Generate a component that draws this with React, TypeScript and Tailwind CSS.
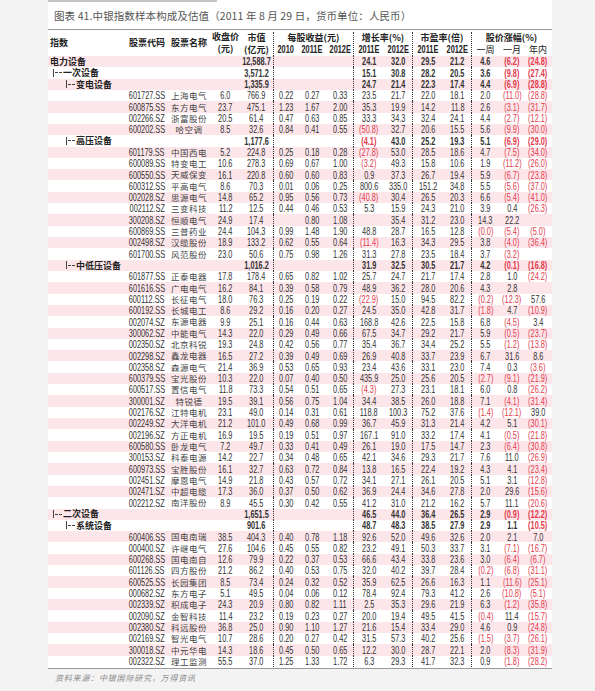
import React from 'react';

// column widths, left to right
const W = [
  'w-[79px]', 'w-[40px]', 'w-[44px]', 'w-[29px]', 'w-[34px]',
  'w-[24px]', 'w-[29px]', 'w-[27px]',
  'w-[30px]', 'w-[29px]',
  'w-[31px]', 'w-[28px]',
  'w-[27px]', 'w-[26px]', 'w-[26px]',
];
const DOT = 'border-r border-dotted border-[#333]';
const hasDot = (i: number) => i === 4 || i === 7 || i === 9 || i === 11;

const NUM = "font-['Liberation_Sans',Arial,sans-serif]";
const CJK = "font-['Noto_Sans_CJK_SC',sans-serif]";

const data = [
  '#0 电力设备 12,588.7 24.1 32.0 29.5 21.2 4.6 (6.2) (24.8)',
  '#1 一次设备 3,571.2 15.1 30.8 28.2 20.5 3.6 (9.8) (27.4)',
  '#2 变电设备 1,335.9 24.7 21.4 22.3 17.4 4.4 (6.9) (28.8)',
  '601727.SS 上海电气 6.0 766.9 0.22 0.27 0.33 23.5 21.7 22.0 18.1 2.0 (11.0) (28.8)',
  '600875.SS 东方电气 23.7 475.1 1.23 1.67 2.00 35.3 19.9 14.2 11.8 2.6 (3.1) (31.7)',
  '002266.SZ 浙富股份 20.5 61.4 0.47 0.63 0.85 33.3 34.3 32.4 24.1 4.4 (2.7) (12.1)',
  '600202.SS 哈空调 8.5 32.6 0.84 0.41 0.55 (50.8) 32.7 20.6 15.5 5.6 (9.9) (30.0)',
  '#2 高压设备 1,177.6 (4.1) 43.0 25.2 19.3 5.1 (6.9) (29.0)',
  '601179.SS 中国西电 5.2 224.8 0.25 0.18 0.28 (27.8) 53.0 28.5 18.6 4.7 (7.5) (34.0)',
  '600089.SS 特变电工 10.6 278.3 0.69 0.67 1.00 (3.2) 49.3 15.8 10.6 1.9 (11.2) (26.0)',
  '600550.SS 天威保变 16.1 220.8 0.60 0.60 0.83 0.9 37.3 26.7 19.4 5.9 (6.7) (23.8)',
  '600312.SS 平高电气 8.6 70.3 0.01 0.06 0.25 800.6 335.0 151.2 34.8 5.5 (5.6) (37.0)',
  '002028.SZ 思源电气 14.8 65.2 0.95 0.56 0.73 (40.8) 30.4 26.5 20.3 6.6 (5.4) (41.0)',
  '002112.SZ 三变科技 11.2 12.5 0.44 0.46 0.53 5.3 15.9 24.3 21.0 3.9 0.4 (26.3)',
  '300208.SZ 恒顺电气 24.9 17.4 - 0.80 1.08 - 35.4 31.2 23.0 14.3 22.2 -',
  '600869.SS 三普药业 24.4 104.3 0.99 1.48 1.90 48.8 28.7 16.5 12.8 (0.0) (5.4) (5.0)',
  '002498.SZ 汉缆股份 18.9 133.2 0.62 0.55 0.64 (11.4) 16.3 34.3 29.5 3.8 (4.0) (36.4)',
  '601700.SS 风范股份 23.0 50.6 0.75 0.98 1.26 31.3 27.8 23.5 18.4 3.7 (3.2) -',
  '#2 中低压设备 1,016.2 31.9 32.5 30.5 21.7 4.2 (0.1) (16.8)',
  '601877.SS 正泰电器 17.8 178.4 0.65 0.82 1.02 25.7 24.7 21.7 17.4 2.8 1.0 (24.2)',
  '601616.SS 广电电气 16.2 84.1 0.39 0.58 0.79 48.9 36.2 28.0 20.6 4.3 2.8 -',
  '600112.SS 长征电气 18.0 76.3 0.25 0.19 0.22 (22.9) 15.0 94.5 82.2 (0.2) (12.3) 57.6',
  '600192.SS 长城电工 8.6 29.2 0.16 0.20 0.27 24.5 35.0 42.8 31.7 (1.8) 4.7 (10.9)',
  '002074.SZ 东源电器 9.9 25.1 0.16 0.44 0.63 168.8 42.6 22.5 15.8 6.8 (4.5) 3.4',
  '300062.SZ 中能电气 14.3 22.0 0.29 0.49 0.66 67.5 34.7 29.2 21.7 5.9 (0.5) (23.7)',
  '002350.SZ 北京科锐 19.3 24.8 0.42 0.56 0.77 35.4 36.7 34.4 25.2 5.5 (1.2) (13.8)',
  '002298.SZ 鑫龙电器 16.5 27.2 0.39 0.49 0.69 26.9 40.8 33.7 23.9 6.7 31.6 8.6',
  '002358.SZ 森源电气 21.4 36.9 0.53 0.65 0.93 23.4 43.6 33.1 23.0 7.4 0.3 (3.6)',
  '600379.SS 宝光股份 10.3 22.0 0.07 0.40 0.50 435.9 25.0 25.6 20.5 (2.7) (9.1) (21.9)',
  '600517.SS 置信电气 11.8 73.3 0.54 0.51 0.65 (4.3) 27.3 23.1 18.1 6.0 0.8 (26.2)',
  '300001.SZ 特锐德 19.5 39.1 0.56 0.75 1.04 34.4 38.5 26.0 18.8 7.1 (4.1) (31.4)',
  '002176.SZ 江特电机 23.1 49.0 0.14 0.31 0.61 118.8 100.3 75.2 37.6 (1.4) (12.1) 39.0',
  '002249.SZ 大洋电机 21.2 101.0 0.49 0.68 0.99 36.7 45.9 31.3 21.4 4.2 5.1 (30.1)',
  '002196.SZ 方正电机 16.9 19.5 0.19 0.51 0.97 167.1 91.0 33.2 17.4 4.1 (0.5) (21.8)',
  '600580.SS 卧龙电气 7.2 49.7 0.33 0.41 0.49 26.1 19.0 17.5 14.7 2.3 (6.4) (30.8)',
  '300153.SZ 科泰电源 14.2 22.7 0.34 0.48 0.65 42.1 34.6 29.3 21.7 7.6 11.0 (26.9)',
  '600973.SS 宝胜股份 16.1 32.7 0.63 0.72 0.84 13.8 16.5 22.4 19.2 4.3 4.1 (23.4)',
  '002451.SZ 摩恩电气 14.9 21.8 0.43 0.57 0.72 34.1 27.1 26.1 20.5 5.1 3.1 (12.8)',
  '002471.SZ 中超电缆 17.3 36.0 0.37 0.50 0.62 36.9 24.4 34.6 27.8 2.0 29.6 (15.6)',
  '002212.SZ 南洋股份 8.9 45.5 0.30 0.42 0.55 41.2 31.0 21.2 16.2 5.7 11.1 (20.6)',
  '#1 二次设备 1,651.5 46.5 44.0 36.4 26.5 2.9 (0.9) (12.2)',
  '#2 系统设备 901.6 48.7 48.3 38.5 27.9 2.9 1.1 (10.5)',
  '600406.SS 国电南瑞 38.5 404.3 0.40 0.78 1.18 92.6 52.0 49.6 32.6 2.0 2.1 7.0',
  '000400.SZ 许继电气 27.6 104.6 0.45 0.55 0.82 23.2 49.1 50.3 33.7 3.1 (7.1) (16.7)',
  '600268.SS 国电南自 12.6 79.9 0.22 0.37 0.53 66.6 43.4 33.8 23.6 3.0 (6.4) (6.7)',
  '601126.SS 四方股份 21.2 86.2 0.40 0.53 0.75 32.0 40.2 39.7 28.4 (0.2) (6.8) (31.1)',
  '600525.SS 长园集团 8.5 73.4 0.24 0.32 0.52 35.9 62.5 26.6 16.3 1.1 (11.6) (25.1)',
  '000682.SZ 东方电子 5.1 49.5 0.04 0.06 0.12 78.4 92.4 79.3 41.2 2.6 (10.8) (5.1)',
  '002339.SZ 积成电子 24.3 20.9 0.80 0.82 1.11 2.5 35.3 29.6 21.9 6.3 (1.2) (35.8)',
  '002090.SZ 金智科技 11.4 23.2 0.19 0.23 0.27 20.0 19.4 49.5 41.5 (0.4) 11.4 (15.7)',
  '002380.SZ 科远股份 36.8 25.0 0.90 1.10 1.27 21.6 15.4 33.4 29.0 4.6 0.9 (24.8)',
  '002169.SZ 智光电气 10.7 28.6 0.20 0.27 0.42 31.5 57.3 40.2 25.6 (1.5) (3.7) (26.1)',
  '300018.SZ 中元华电 14.3 18.6 0.45 0.50 0.65 12.2 30.0 28.7 22.1 2.0 (8.3) (31.9)',
  '002322.SZ 理工监测 55.5 37.0 1.25 1.33 1.72 6.3 29.3 41.7 32.3 0.9 (1.8) (28.2)',
];

// narrow figures: Arial squeezed horizontally, like Arial Narrow in the source
const Narrow = ({ children }: { children: React.ReactNode }) => (
  <span className="inline-block whitespace-nowrap scale-x-[0.7]">{children}</span>
);

const Cell = ({ i, v, bold }: { i: number; v: string; bold?: boolean }) => (
  <div
    className={`${W[i]} ${hasDot(i) ? DOT : ''} h-full flex items-center justify-center text-[10.5px] leading-none ${NUM} ${
      v.startsWith('(') ? 'text-[#e23a4c]' : 'text-[#333]'
    } ${bold ? 'font-bold' : ''}`}
  >
    {v === '-' ? '' : <Narrow>{v}</Narrow>}
  </div>
);

const Row = ({ line, idx }: { line: string; idx: number }) => {
  const p = line.split(' ');
  const bg = idx % 2 === 0 ? 'bg-[#fde6ea]' : 'bg-white';

  if (p[0].startsWith('#')) {
    const level = p[0].slice(1);
    const vals = p.slice(3);
    return (
      <div className={`flex h-[11.32px] ${bg}`}>
        <div
          className={`w-[163px] h-full flex items-center text-[9px] font-bold text-[#222] ${CJK} ${
            level === '0' ? 'pl-[2px]' : level === '1' ? 'pl-[5px]' : 'pl-[18px]'
          }`}
        >
          {level !== '0' && (
            <span className="flex items-center h-[8px] w-[10px] border-l border-[#444]">
              <span className="w-[3px] h-px bg-[#444] ml-[1px]" />
              <span className="w-[3px] h-px bg-[#444] ml-[1px]" />
            </span>
          )}
          {p[1]}
        </div>
        <Cell i={3} v="-" />
        <Cell i={4} v={p[2]} bold />
        <Cell i={5} v="-" />
        <Cell i={6} v="-" />
        <Cell i={7} v="-" />
        {vals.map((v, k) => (
          <Cell key={k} i={8 + k} v={v} bold />
        ))}
      </div>
    );
  }

  return (
    <div className={`flex h-[11.32px] ${bg}`}>
      <div className={W[0]} />
      <Cell i={1} v={p[0]} />
      <div className={`${W[2]} h-full flex items-center justify-center text-[8.5px] tracking-[0.5px] text-[#444] ${CJK}`}>
        {p[1]}
      </div>
      {p.slice(2).map((v, k) => (
        <Cell key={k} i={3 + k} v={v} />
      ))}
    </div>
  );
};

const Sub = ({ i, t }: { i: number; t: string }) => (
  <div className={`${W[i]} flex items-center justify-center text-[10.5px] font-bold text-[#222] ${NUM}`}>
    <Narrow>{t}</Narrow>
  </div>
);

export default function App() {
  return (
    <div className="w-[595px] h-[691px] bg-[#f3f3f3] overflow-hidden">
      <div className="ml-[48px] w-[504px] bg-white">
        <div className="h-[2px] w-[169px] bg-[#c4c4c4]" />
        <div className={`h-[27px] flex items-center pl-[6px] pt-[1px] text-[10.5px] tracking-[0.1px] text-[#555] ${CJK}`}>
          图表 41.中银指数样本构成及估值（2011 年 8 月 29 日，货币单位：人民币）
        </div>
        <div className="h-px bg-[#9a9a9a]" />

        {/* header */}
        <div className={`flex h-[26px] text-[#222] ${CJK} text-[9px] font-bold`}>
          <div className={`${W[0]} flex items-center pl-[2px]`}>指数</div>
          <div className={`${W[1]} flex items-center justify-center`}>股票代码</div>
          <div className={`${W[2]} flex items-center justify-center`}>股票名称</div>
          <div className={`${W[3]} flex flex-col items-center justify-center leading-[12px]`}>
            <span>收盘价</span>
            <span>(元)</span>
          </div>
          <div className={`${W[4]} ${DOT} mt-[2px] flex flex-col items-center justify-center leading-[12px]`}>
            <span>市值</span>
            <span>(亿元)</span>
          </div>
          <div className={`w-[80px] ${DOT} mt-[2px] flex flex-col`}>
            <div className="h-[12px] flex items-center justify-center">每股收益(元)</div>
            <div className="flex h-[12px]">
              <Sub i={5} t="2010" />
              <Sub i={6} t="2011E" />
              <Sub i={7} t="2012E" />
            </div>
          </div>
          <div className={`w-[59px] ${DOT} mt-[2px] flex flex-col`}>
            <div className="h-[12px] flex items-center justify-center">增长率(%)</div>
            <div className="flex h-[12px]">
              <Sub i={8} t="2011E" />
              <Sub i={9} t="2012E" />
            </div>
          </div>
          <div className={`w-[59px] ${DOT} mt-[2px] flex flex-col`}>
            <div className="h-[12px] flex items-center justify-center">市盈率(倍)</div>
            <div className="flex h-[12px]">
              <Sub i={10} t="2011E" />
              <Sub i={11} t="2012E" />
            </div>
          </div>
          <div className="w-[79px] mt-[2px] flex flex-col">
            <div className="h-[12px] flex items-center justify-center">股价涨幅(%)</div>
            <div className="flex h-[12px] font-normal">
              <div className={`${W[12]} flex items-center justify-center`}>一周</div>
              <div className={`${W[13]} flex items-center justify-center`}>一月</div>
              <div className={`${W[14]} flex items-center justify-center`}>年内</div>
            </div>
          </div>
        </div>

        {data.map((line, idx) => (
          <Row key={idx} line={line} idx={idx} />
        ))}
        <div className="h-[1px] bg-white" />
        <div className="h-px bg-[#9a9a9a]" />
      </div>
      <div className={`pl-[55px] pt-[3px] text-[8px] italic tracking-[0.8px] text-[#8a8a8a] ${CJK}`}>
        资料来源：中银国际研究，万得资讯
      </div>
    </div>
  );
}
